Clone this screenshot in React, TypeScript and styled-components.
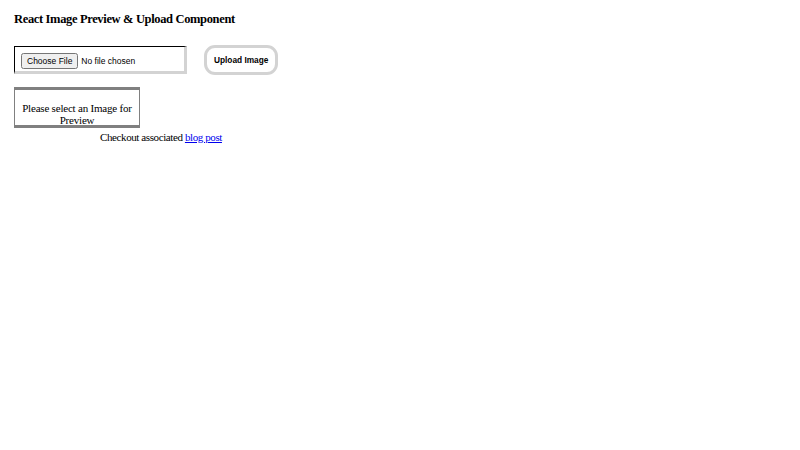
import React from 'react'
import styled, { createGlobalStyle } from 'styled-components'

const GlobalStyle = createGlobalStyle`
  html, body {
    margin: 0;
    padding: 0;
    background: #ffffff;
    font-family: "Liberation Serif", "Times New Roman", serif;
    font-size: 11px;
    color: #000000;
  }
`

const Page = styled.div`
  padding: 11px 14px;
`

const Title = styled.h3`
  margin: 0 0 18px 0;
  font-size: 12.5px;
  letter-spacing: -0.35px;
  font-weight: bold;
  line-height: 16px;
`

const UploadForm = styled.form`
  display: flex;
  align-items: center;
  margin-bottom: 12px;
`

const FileInput = styled.input`
  box-sizing: border-box;
  width: 173px;
  height: 28px;
  padding: 6px;
  border-top: 1px solid #000000;
  border-left: 1px solid #000000;
  border-bottom: 3px solid lightgray;
  border-right: 3px solid lightgray;
  font-family: "Liberation Sans", Arial, sans-serif;
  font-size: 8.5px;
  cursor: pointer;

  &::file-selector-button {
    padding: 1px 4px;
    margin-right: 3px;
    font-size: 8.5px;
  }
`

const SubmitButton = styled.button`
  box-sizing: border-box;
  margin-left: 17px;
  height: 30px;
  padding: 0 7px;
  background: #ffffff;
  border: 3px solid lightgray;
  border-radius: 11px;
  font-family: "Liberation Sans", Arial, sans-serif;
  font-weight: 700;
  font-size: 8.3px;
  color: #000000;
  cursor: pointer;
`

const ImgPreview = styled.div`
  box-sizing: border-box;
  width: 126px;
  height: 41px;
  padding-top: 13px;
  text-align: center;
  line-height: 11.5px;
  letter-spacing: -0.2px;
  border-left: 1px solid gray;
  border-right: 1px solid gray;
  border-top: 3px solid gray;
  border-bottom: 3px solid gray;
`

const CenterText = styled.div`
  width: 294px;
  text-align: center;
  margin-top: 2px;
  line-height: 14px;
  letter-spacing: -0.4px;

  a {
    color: #0000ee;
  }
`

export default function App() {
  return (
    <>
      <GlobalStyle />
      <Page>
        <Title>React Image Preview &amp; Upload Component</Title>
        <UploadForm onSubmit={(e) => e.preventDefault()}>
          <FileInput type="file" />
          <SubmitButton type="submit">Upload Image</SubmitButton>
        </UploadForm>
        <ImgPreview>Please select an Image for Preview</ImgPreview>
        <CenterText>
          Checkout associated <a href="#">blog post</a>
        </CenterText>
      </Page>
    </>
  )
}
